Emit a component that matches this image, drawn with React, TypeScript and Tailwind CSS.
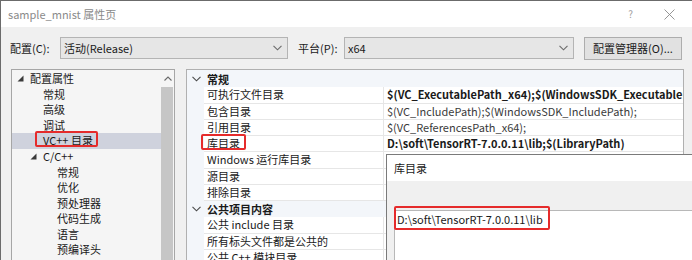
import React from "react";

const F = { fontFamily: "'Noto Sans CJK SC', 'Noto Sans', sans-serif" };

function Chevron({ className = "" }: { className?: string }) {
  return (
    <svg width="9" height="6" viewBox="0 0 9 6" className={className}>
      <path d="M0.5 0.8 L4.5 4.8 L8.5 0.8" fill="none" stroke="currentColor" strokeWidth="1.1" />
    </svg>
  );
}

function Tri() {
  return (
    <svg width="7" height="7" viewBox="0 0 7 7">
      <path d="M6.5 0.5 L6.5 6.5 L0.5 6.5 Z" fill="#3a3a3a" />
    </svg>
  );
}

const treeRows: { label: string; level: number; tri?: boolean; sel?: boolean; box?: boolean }[] = [
  { label: "配置属性", level: 0, tri: true },
  { label: "常规", level: 1 },
  { label: "高级", level: 1 },
  { label: "调试", level: 1 },
  { label: "VC++ 目录", level: 1, sel: true, box: true },
  { label: "C/C++", level: 1, tri: true },
  { label: "常规", level: 2 },
  { label: "优化", level: 2 },
  { label: "预处理器", level: 2 },
  { label: "代码生成", level: 2 },
  { label: "语言", level: 2 },
  { label: "预编译头", level: 2 },
];

type Row =
  | { kind: "h"; label: string }
  | { kind: "p"; label: string; value?: string; bold?: boolean; box?: boolean };

const gridRows: Row[] = [
  { kind: "h", label: "常规" },
  { kind: "p", label: "可执行文件目录", value: "$(VC_ExecutablePath_x64);$(WindowsSDK_ExecutablePath);$(VS_ExecutablePath)", bold: true },
  { kind: "p", label: "包含目录", value: "$(VC_IncludePath);$(WindowsSDK_IncludePath);" },
  { kind: "p", label: "引用目录", value: "$(VC_ReferencesPath_x64);" },
  { kind: "p", label: "库目录", value: "D:\\soft\\TensorRT-7.0.0.11\\lib;$(LibraryPath)", bold: true, box: true },
  { kind: "p", label: "Windows 运行库目录", value: "" },
  { kind: "p", label: "源目录", value: "" },
  { kind: "p", label: "排除目录", value: "" },
  { kind: "h", label: "公共项目内容" },
  { kind: "p", label: "公共 include 目录", value: "" },
  { kind: "p", label: "所有标头文件都是公共的", value: "" },
  { kind: "p", label: "公共 C++ 模块目录", value: "" },
];

const indent = ["pl-[5px]", "pl-[18px]", "pl-[32px]"];

export default function App() {
  return (
    <div
      className="relative w-[692px] h-[260px] overflow-hidden bg-[#f0f0f0] border-t border-l border-[#6b6b6b] text-[11px] text-[#1a1a1a] leading-none"
      style={F}
    >
      {/* Title bar */}
      <div className="h-[26px] bg-white flex items-center pl-[7px] pr-[17px]">
        <span className="text-[#8a8a8a]">sample_mnist 属性页</span>
        <div className="flex-1" />
        <span className="text-[#a0a0a0] text-[10px] mr-[31px]">?</span>
        <svg width="11" height="11" viewBox="0 0 11 11">
          <path d="M0.5 0.5 L10.5 10.5 M10.5 0.5 L0.5 10.5" stroke="#8a8a8a" strokeWidth="0.9" />
        </svg>
      </div>

      {/* Config row */}
      <div className="flex items-center h-[22px] mt-[10px] pl-[9px]">
        <span className="w-[50px]">配置(C):</span>
        <div className="w-[228px] h-[22px] border border-[#b4b4b4] bg-[#e6e6e6] flex items-center pl-[3px] pr-[5px]">
          <span className="flex-1">活动(Release)</span>
          <Chevron className="text-[#6a6a6a]" />
        </div>
        <span className="ml-[10px] w-[46px]">平台(P):</span>
        <div className="w-[230px] h-[22px] border border-[#b4b4b4] bg-[#e6e6e6] flex items-center pl-[3px] pr-[5px]">
          <span className="flex-1">x64</span>
          <Chevron className="text-[#6a6a6a]" />
        </div>
        <div className="ml-[10px] w-[98px] h-[23px] border border-[#adadad] bg-[#e1e1e1] flex items-center justify-center">
          配置管理器(O)...
        </div>
      </div>

      {/* Main */}
      <div className="flex mt-[10px] pl-[10px]">
        {/* Tree */}
        <div className="w-[164px] h-[200px] border border-[#a6a6a6] bg-[#f5f5f5] flex">
          <div className="flex-1 pt-[1px]">
            {treeRows.map((r, i) => (
              <div
                key={i}
                className={`relative h-[15.55px] flex items-center ${r.sel ? "bg-[#cfd2dd]" : ""}`}
              >
                <div className={`flex items-center ${indent[r.level]}`}>
                  {r.tri ? (
                    <span className="w-[13px] flex items-center">
                      <Tri />
                    </span>
                  ) : (
                    <span className="w-[13px]" />
                  )}
                  <span>{r.label}</span>
                </div>
                {r.box && (
                  <span className="absolute left-[23px] w-[63px] top-[-2px] h-[16px] border-2 border-[#e52b2b] rounded-[2px]" />
                )}
              </div>
            ))}
          </div>
          <div className="w-[13px] flex flex-col">
            <div className="h-[17px] flex items-center justify-center">
              <svg width="8" height="5" viewBox="0 0 8 5">
                <path d="M0.5 4.5 L4 1 L7.5 4.5" fill="none" stroke="#6a6a6a" strokeWidth="1.1" />
              </svg>
            </div>
            <div className="flex-1 bg-[#c6c6c6] mr-[1px]" />
          </div>
        </div>

        {/* Property grid */}
        <div className="ml-[11px] w-[498px] h-[200px] border border-[#b0b0b0] bg-[#f3f6fa] pt-[1px]">
          {gridRows.map((r, i) =>
            r.kind === "h" ? (
              <div key={i} className="h-[16.25px] flex items-center">
                <span className="w-[17px] flex justify-center pl-[1px]">
                  <Chevron className="text-[#4a4a4a]" />
                </span>
                <span className="pl-[3px] font-bold">{r.label}</span>
              </div>
            ) : (
              <div key={i} className="relative h-[16.25px] flex">
                <span className="w-[17px]" />
                <div className="w-[180px] bg-white border-b border-r border-[#e6e6e6] flex items-center pl-[3px]">
                  <span>{r.label}</span>
                </div>
                <div className="flex-1 bg-white border-b border-[#e6e6e6] flex items-center pl-[3px] overflow-hidden whitespace-nowrap">
                  <span className={r.bold ? "font-bold" : "text-[#3a3a3a]"}>{r.value}</span>
                </div>
                {r.box && (
                  <span className="absolute left-[14px] w-[45px] top-[-2px] h-[16px] border-2 border-[#e52b2b] rounded-[2px]" />
                )}
              </div>
            )
          )}
        </div>
      </div>

      {/* Popup dialog */}
      <div className="absolute left-[385px] top-[153px] w-[330px] h-[120px] border border-[#7a7a7a] bg-white flex flex-col">
        <div className="h-[26px] flex items-center pl-[7px]">库目录</div>
        <div className="h-[29px] bg-[#f0f0f0]" />
        <div className="flex-1 bg-[#f0f0f0] pl-[7px]">
          <div className="relative h-full bg-white border-l border-t border-[#b8b8b8] pt-[3px] pl-[2px]">
            <span>D:\soft\TensorRT-7.0.0.11\lib</span>
            <span className="absolute left-[-1px] w-[156px] top-[-5px] h-[24px] border-2 border-[#e52b2b] rounded-[2px]" />
          </div>
        </div>
      </div>
    </div>
  );
}
